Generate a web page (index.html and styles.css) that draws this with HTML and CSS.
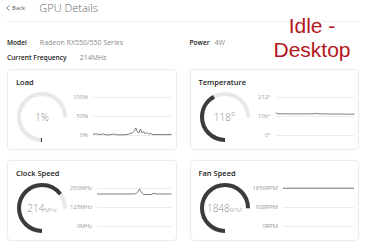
FILE: index.html
```html
<!DOCTYPE html>
<html>
  <head>
    <title>GPU Details</title>
    <link rel="stylesheet" href="styles.css">
  </head>
  <body>
    <div class="page">
      <div class="header">
        <a class="back" href="#">
          <svg width="4" height="6" viewBox="0 0 4 6"><polyline points="3.3,0.4 0.8,3 3.3,5.6" fill="none" stroke="#555" stroke-width="0.8" /></svg>
          <span>Back</span>
        </a>
        <h1 class="title">GPU Details</h1>
      </div>

      <div class="info">
        <div class="info-left">
          <div class="info-item"><span class="label">Model</span><span class="value">Radeon RX550/550 Series</span></div>
          <div class="info-item"><span class="label">Current Frequency</span><span class="value">214MHz</span></div>
        </div>
        <div class="info-right">
          <div class="info-item"><span class="label">Power</span><span class="value power">4W</span></div>
        </div>
      </div>

      <div class="cards">
        <div class="card">
          <div class="card-title">Load</div>
          <div class="card-body">
            <div class="gauge">
              <svg width="52" height="52" viewBox="0 0 52 52">
                <circle class="track" cx="26" cy="26" r="23" stroke-dasharray="108.4 200" />
                <circle class="fill" cx="26" cy="26" r="23" stroke-dasharray="1.1 200" />
              </svg>
              <div class="gauge-value">1%</div>
            </div>
            <div class="chart">
              <span class="tick">100%</span><div class="grid-line"></div>
              <span class="tick">50%</span><div class="grid-line"></div>
              <span class="tick">0%</span><div class="grid-line"></div>
              <svg class="plot" viewBox="0 0 76 50" preserveAspectRatio="none">
                <polyline points="0 43.2, 3 42.8, 6 43.5, 10 43, 14 44, 17 43.6, 20 43, 23 43.8, 30 43.8, 34 43.2, 38 42, 40 40, 41.5 37, 43 41, 44.5 42, 46 38, 47.5 42, 49 40.5, 50.5 43, 52 41.5, 54 43, 56 42.5, 58 43.6, 62 43.5, 66 43.7, 70 43.6, 76 43.4" />
              </svg>
            </div>
          </div>
        </div>

        <div class="card">
          <div class="card-title">Temperature</div>
          <div class="card-body">
            <div class="gauge">
              <svg width="52" height="52" viewBox="0 0 52 52">
                <circle class="track" cx="26" cy="26" r="23" stroke-dasharray="108.4 200" />
                <circle class="fill" cx="26" cy="26" r="23" stroke-dasharray="60.3 200" />
              </svg>
              <div class="gauge-value">118°</div>
            </div>
            <div class="chart">
              <span class="tick">212°</span><div class="grid-line"></div>
              <span class="tick">106°</span><div class="grid-line"></div>
              <span class="tick">0°</span><div class="grid-line"></div>
              <svg class="plot" viewBox="0 0 76 50" preserveAspectRatio="none">
                <polyline points="0 21.4, 1 22.8, 12 22.9, 30 22.9, 37 22.8, 39 22.2, 41 22.9, 55 23, 76 23.2" />
              </svg>
            </div>
          </div>
        </div>

        <div class="card">
          <div class="card-title">Clock Speed</div>
          <div class="card-body">
            <div class="gauge">
              <svg width="52" height="52" viewBox="0 0 52 52">
                <circle class="track" cx="26" cy="26" r="23" stroke-dasharray="108.4 200" />
                <circle class="fill" cx="26" cy="26" r="23" stroke-dasharray="92.8 200" />
              </svg>
              <div class="gauge-value">214<small>MHz</small></div>
            </div>
            <div class="chart">
              <span class="tick">250MHz</span><div class="grid-line"></div>
              <span class="tick">125MHz</span><div class="grid-line"></div>
              <span class="tick">0MHz</span><div class="grid-line"></div>
              <svg class="plot" viewBox="0 0 69 50" preserveAspectRatio="none">
                <polyline points="0 12, 30 12, 36 11.8, 38 9.5, 39.5 7, 41 10, 43 12.4, 50 12.5, 53 11.3, 55 12, 69 12" />
              </svg>
            </div>
          </div>
        </div>

        <div class="card">
          <div class="card-title">Fan Speed</div>
          <div class="card-body">
            <div class="gauge">
              <svg width="52" height="52" viewBox="0 0 52 52">
                <circle class="track" cx="26" cy="26" r="23" stroke-dasharray="108.4 200" />
                <circle class="fill" cx="26" cy="26" r="23" stroke-dasharray="107.9 200" />
              </svg>
              <div class="gauge-value">1848<small>RPM</small></div>
            </div>
            <div class="chart">
              <span class="tick">1856RPM</span><div class="grid-line"></div>
              <span class="tick">928RPM</span><div class="grid-line"></div>
              <span class="tick">0RPM</span><div class="grid-line"></div>
              <svg class="plot" viewBox="0 0 70 50" preserveAspectRatio="none">
                <polyline points="0 6.2, 70 6.2" />
              </svg>
            </div>
          </div>
        </div>
      </div>

      <div class="note">Idle -<br>Desktop</div>
    </div>
  </body>
</html>
```

FILE: styles.css
```css
body {
  margin: 0;
  background: #fff;
  font-family: "Open Sans", "Noto Sans", sans-serif;
  color: #222;
}
.page {
  position: relative;
  width: 366px;
  height: 250px;
  padding: 0 7px;
  box-sizing: border-box;
  overflow: hidden;
}
.header {
  display: flex;
  align-items: center;
  height: 15px;
  padding-bottom: 6px;
  border-bottom: 1px solid #eeeeee;
}
.back {
  display: flex;
  align-items: center;
  gap: 2px;
  margin-left: -1px;
  color: #555;
  font-size: 6px;
  text-decoration: none;
}
.back svg {
  display: block;
}
.title {
  margin: 0 0 0 14px;
  font-size: 11px;
  font-weight: 300;
  color: #666;
  line-height: 15px;
}
.info {
  display: grid;
  grid-template-columns: 1fr 1fr;
  column-gap: 13px;
  padding-top: 10px;
  margin-bottom: 7px;
}
.info-item {
  height: 15px;
  line-height: 15px;
  white-space: nowrap;
}
.label {
  font-size: 6.6px;
  font-weight: 600;
  color: #222;
}
.value {
  margin-left: 13px;
  font-size: 7px;
  color: #8a8a8a;
}
.value.power {
  margin-left: 5px;
}
.cards {
  display: grid;
  grid-template-columns: 1fr 1fr;
  column-gap: 13px;
  row-gap: 10px;
}
.card {
  border: 1px solid #ececec;
  border-radius: 4px;
  padding: 7px 4px 6px 8px;
  box-shadow: 0 0 2px rgba(0, 0, 0, 0.04);
}
.card-title {
  font-size: 7.5px;
  font-weight: 600;
  line-height: 11px;
  margin-bottom: 3px;
  color: #222;
}
.card-body {
  display: flex;
}
.gauge {
  display: grid;
  place-items: center;
  width: 52px;
  height: 52px;
}
.gauge svg,
.gauge-value {
  grid-area: 1 / 1;
}
.gauge svg {
  display: block;
}
.gauge circle {
  fill: none;
  stroke-width: 4;
  transform: rotate(90deg);
  transform-origin: 26px 26px;
}
.gauge .track {
  stroke: #e8e8e8;
}
.gauge .fill {
  stroke: #3b3b3d;
}
.gauge-value {
  font-size: 10px;
  font-weight: 300;
  color: #8f8f8f;
  white-space: nowrap;
}
.gauge-value small {
  font-size: 6px;
}
.chart {
  flex: 1;
  display: grid;
  grid-template-columns: minmax(18px, auto) 1fr;
  grid-template-rows: repeat(3, 12px);
  row-gap: 7px;
  column-gap: 5px;
  margin-left: 2px;
  height: 50px;
}
.tick {
  grid-column: 1;
  justify-self: end;
  align-self: center;
  font-size: 5.8px;
  line-height: 12px;
  color: #9a9a9a;
  white-space: nowrap;
}
.grid-line {
  grid-column: 2;
  align-self: center;
  height: 1px;
  background: #ececec;
}
.chart > :nth-child(1),
.chart > :nth-child(2) {
  grid-row: 1;
}
.chart > :nth-child(3),
.chart > :nth-child(4) {
  grid-row: 2;
}
.chart > :nth-child(5),
.chart > :nth-child(6) {
  grid-row: 3;
}
.plot {
  grid-column: 2;
  grid-row: 1 / 4;
  display: block;
  width: 100%;
  height: 50px;
  overflow: visible;
}
.plot polyline {
  fill: none;
  stroke: #5a5a5a;
  stroke-width: 0.8;
  vector-effect: non-scaling-stroke;
}
.note {
  position: absolute;
  top: 14px;
  left: 262px;
  width: 100px;
  text-align: center;
  font-family: "Liberation Sans", Arial, sans-serif;
  font-size: 21px;
  line-height: 24px;
  color: #b3171d;
}
```
